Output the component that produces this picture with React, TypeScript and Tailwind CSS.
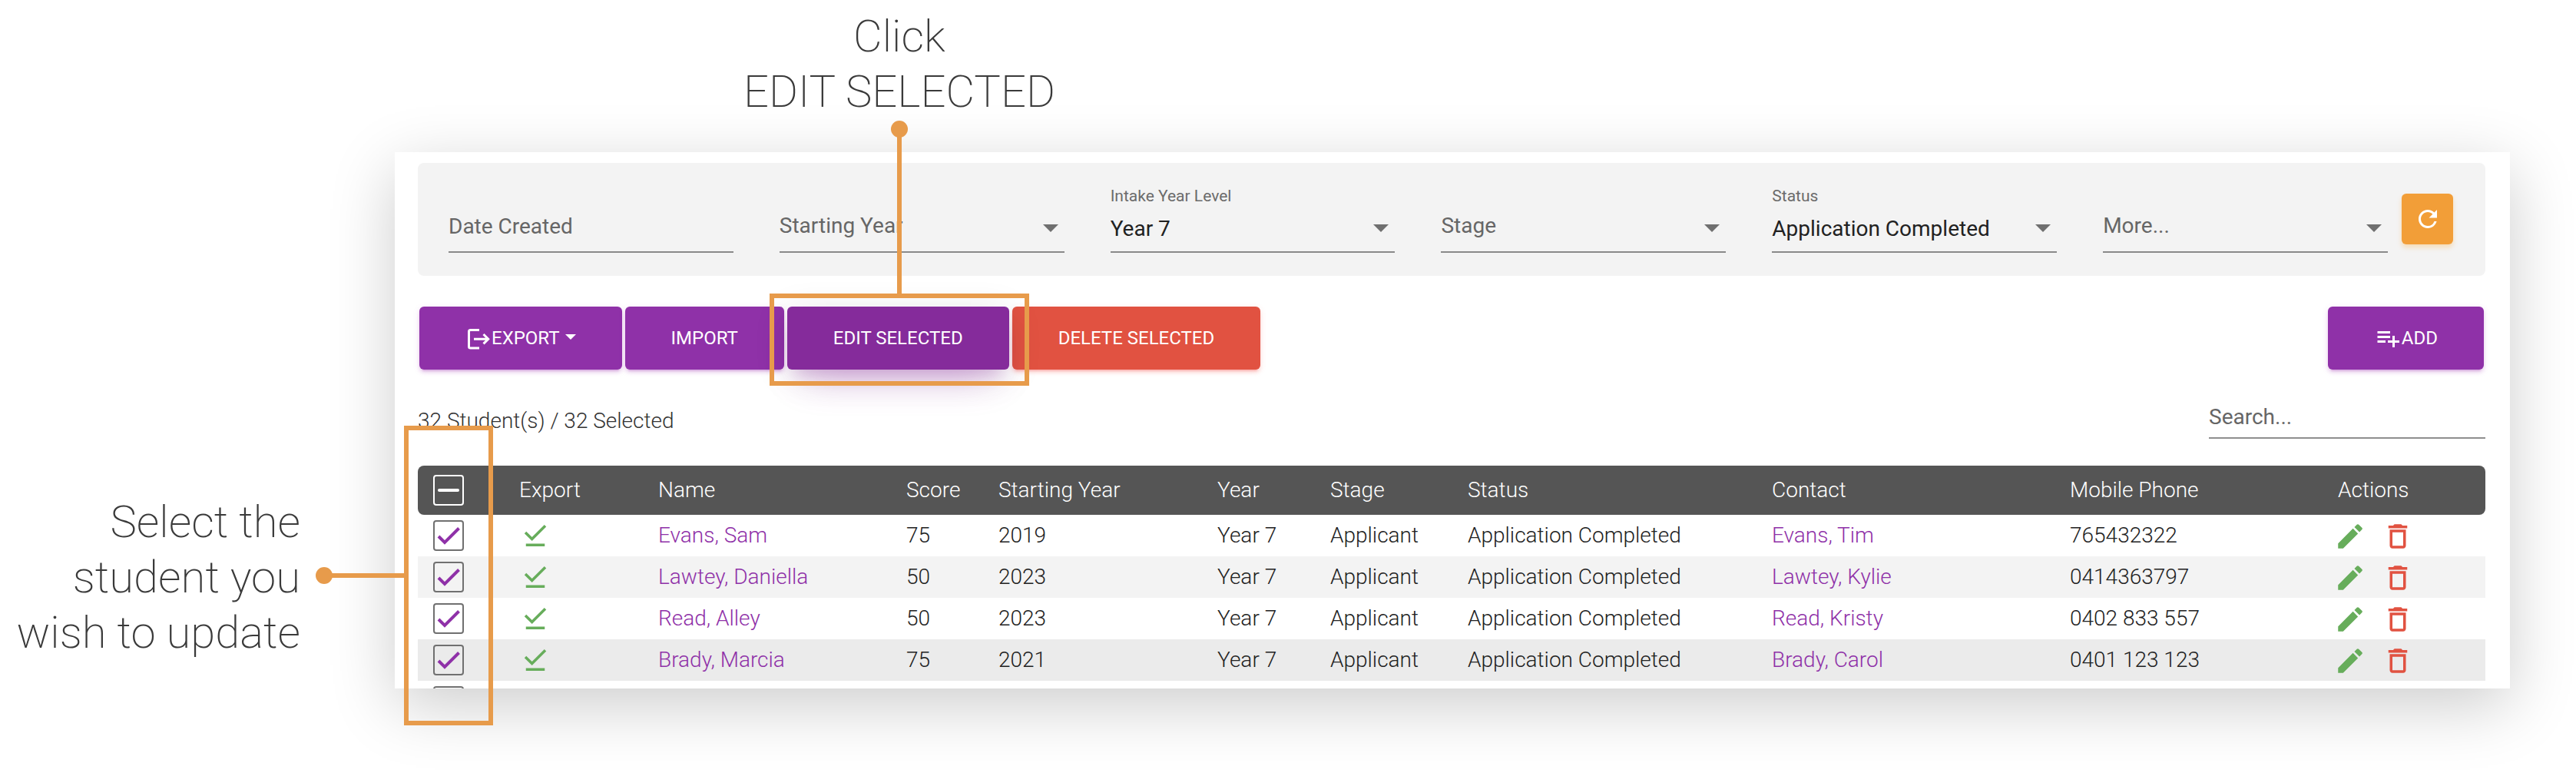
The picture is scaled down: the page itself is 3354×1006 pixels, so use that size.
import { useState } from "react";
import type { ReactNode } from "react";
import { MdDeleteOutline, MdDownloadDone, MdEdit, MdPlaylistAdd, MdRefresh } from "react-icons/md";
import { twMerge } from "tailwind-merge";

const FILTERS = [
  { id: "starting-year", label: "Starting Year", value: "" },
  { id: "intake-year-level", label: "Intake Year Level", value: "Year 7" },
  { id: "stage", label: "Stage", value: "" },
  { id: "status", label: "Status", value: "Application Completed" },
  { id: "more", label: "More...", value: "" },
] as const;

const COLUMNS = [
  { title: "Export", width: "w-[181px]" },
  { title: "Name", width: "w-[323px]" },
  { title: "Score", width: "w-[120px]" },
  { title: "Starting Year", width: "w-[285px]" },
  { title: "Year", width: "w-[147px]" },
  { title: "Stage", width: "w-[179px]" },
  { title: "Status", width: "w-[396px]" },
  { title: "Contact", width: "w-[388px]" },
  { title: "Mobile Phone", width: "w-[349px]" },
  { title: "Actions", width: "w-[192px]" },
] as const;

const STUDENTS = [
  { name: "Evans, Sam", score: 75, start: 2019, contact: "Evans, Tim", phone: "765432322", row: "bg-white" },
  { name: "Lawtey, Daniella", score: 50, start: 2023, contact: "Lawtey, Kylie", phone: "0414363797", row: "bg-[#f3f3f3]" },
  { name: "Read, Alley", score: 50, start: 2023, contact: "Read, Kristy", phone: "0402 833 557", row: "bg-white" },
  { name: "Brady, Marcia", score: 75, start: 2021, contact: "Brady, Carol", phone: "0401 123 123", row: "bg-[#ebebeb]" },
] as const;

function Caret({ className }: { className?: string }) {
  return (
    <svg viewBox="0 0 20 10" className={className} fill="currentColor" aria-hidden="true">
      <path d="M0 0h20L10 10z" />
    </svg>
  );
}

function ExportIcon() {
  return (
    <svg viewBox="0 0 32 32" className="h-8 w-8" fill="none" stroke="currentColor" strokeWidth="3" aria-hidden="true">
      <path d="M18 5.500H6.500Q4.500 5.500 4.500 7.500v19.500Q4.500 29 6.500 29H18M11 17.200h18M23.500 11l6.200 6.200-6.200 6.200" />
    </svg>
  );
}

function SelectField({ id, label, value }: { id: string; label: string; value: string }) {
  return (
    <div className="min-w-0 flex-1">
      {value && (
        <label htmlFor={id} className="mb-[2px] block text-[21px] leading-6 text-[#6b6b6b]">
          {label}
        </label>
      )}
      <div className="relative">
        <select
          id={id}
          aria-label={value ? undefined : label}
          className={twMerge(
            "block h-[68px] w-full appearance-none border-b-2 border-[#8a8a8a] bg-transparent text-[28px] text-[#666] outline-none",
            value && "h-[60px] text-[#212121]",
          )}
        >
          <option>{value || label}</option>
        </select>
        <Caret className="pointer-events-none absolute right-2 bottom-[27px] h-[10px] w-5 text-[#6f6f6f]" />
      </div>
    </div>
  );
}

function ActionButton({ className, children }: { className?: string; children: ReactNode }) {
  return (
    <button
      type="button"
      className={twMerge(
        "flex h-[82px] items-center justify-center rounded-md bg-[#8f31a8] px-[60px] text-2xl text-white shadow-[0_4px_4px_rgba(156,39,176,0.14),0_6px_2px_-4px_rgba(156,39,176,0.2),0_2px_10px_rgba(156,39,176,0.12)]",
        className,
      )}
    >
      {children}
    </button>
  );
}

function RowCheckbox({ label }: { label: string }) {
  const [checked, setChecked] = useState(true);

  return (
    <span className="relative ml-5 block h-10 w-10">
      <input
        type="checkbox"
        aria-label={label}
        checked={checked}
        onChange={() => setChecked(!checked)}
        className="block h-10 w-10 appearance-none rounded border-2 border-[#707070]"
      />
      {checked && (
        <svg
          viewBox="0 0 40 40"
          className="pointer-events-none absolute inset-0 h-10 w-10 text-[#8f31a8]"
          fill="none"
          stroke="currentColor"
          strokeWidth="4"
          aria-hidden="true"
        >
          <path d="M7 21l8 8 18.500-18.500" />
        </svg>
      )}
    </span>
  );
}

function Filters() {
  return (
    <form className="flex items-end rounded-lg bg-[#f3f3f3] pt-[31px] pr-[42px] pb-[30px] pl-10">
      <div className="flex flex-1 items-end gap-[60px]">
        <div className="min-w-0 flex-1">
          <input
            type="text"
            aria-label="Date Created"
            placeholder="Date Created"
            className="block h-[68px] w-full border-b-2 border-[#8a8a8a] bg-transparent text-[28px] outline-none placeholder:text-[#666] placeholder:opacity-100"
          />
        </div>
        {FILTERS.map((filter) => (
          <SelectField key={filter.id} {...filter} />
        ))}
      </div>
      <button
        type="button"
        aria-label="Refresh"
        className="mb-[11px] ml-[18px] flex h-[66px] w-[67px] items-center justify-center rounded-md bg-[#f29e38] text-white shadow-[0_4px_6px_rgba(255,152,0,0.25)]"
      >
        <MdRefresh className="h-9 w-9" />
      </button>
    </form>
  );
}

function StudentTable() {
  return (
    <div className="h-[290px] overflow-hidden">
      <table className="w-full table-fixed border-collapse text-left text-[28px] leading-none font-light text-[#222]">
        <thead>
          <tr className="h-16 text-white">
            <th className="w-[132px] rounded-l-lg bg-[#555] p-0">
              <span className="relative ml-5 block h-10 w-10">
                <input
                  type="checkbox"
                  aria-label="Select all students"
                  className="block h-10 w-10 appearance-none rounded border-2 border-white"
                />
                <span className="pointer-events-none absolute top-[18px] left-[6px] h-1 w-7 rounded-full bg-white" />
              </span>
            </th>
            {COLUMNS.map((column) => (
              <th key={column.title} className={twMerge("bg-[#555] p-0 font-light last:rounded-r-lg", column.width)}>
                {column.title}
              </th>
            ))}
          </tr>
        </thead>
        <tbody>
          {STUDENTS.map((student) => (
            <tr key={student.name} className={twMerge("h-[54px]", student.row)}>
              <td className="p-0">
                <RowCheckbox label={`Select ${student.name}`} />
              </td>
              <td className="p-0">
                <MdDownloadDone className="h-[42px] w-[42px] text-[#67ad5b]" />
              </td>
              <td className="p-0">
                <a href="#student" className="text-[#8f31a8]">
                  {student.name}
                </a>
              </td>
              <td className="p-0">{student.score}</td>
              <td className="p-0">{student.start}</td>
              <td className="p-0">Year 7</td>
              <td className="p-0">Applicant</td>
              <td className="p-0">Application Completed</td>
              <td className="p-0">
                <a href="#contact" className="text-[#8f31a8]">
                  {student.contact}
                </a>
              </td>
              <td className="p-0">{student.phone}</td>
              <td className="p-0">
                <div className="-ml-[5px] flex gap-5 pt-[2px]">
                  <button type="button" aria-label={`Edit ${student.name}`} className="text-[#67ad5b]">
                    <MdEdit className="h-[42px] w-[42px]" />
                  </button>
                  <button type="button" aria-label={`Delete ${student.name}`} className="text-[#e15241]">
                    <MdDeleteOutline className="h-[42px] w-[42px]" />
                  </button>
                </div>
              </td>
            </tr>
          ))}
          <tr className="h-[54px]">
            <td className="p-0" colSpan={11}>
              <RowCheckbox label="Select next student" />
            </td>
          </tr>
        </tbody>
      </table>
    </div>
  );
}

export default function App() {
  return (
    <div className="flex bg-white pb-[110px] font-['Roboto',sans-serif]">
      <aside className="w-[514px] shrink-0 self-end pr-[123px] pb-[37px] text-right text-[58px] leading-[72px] font-extralight text-[#3a3a3a]">
        <p>
          Select the
          <br />
          student you
          <br />
          wish to update
        </p>
      </aside>

      <main className="mr-[86px] min-w-0 flex-1">
        <p className="w-[1314px] pt-[11px] pb-[43px] text-center text-[58px] leading-[72px] font-extralight text-[#3a3a3a]">
          Click
          <br />
          EDIT SELECTED
        </p>

        <section className="bg-white px-[30px] pt-[14px] pr-8 shadow-[0_22px_80px_rgba(0,0,0,0.2)]">
          <Filters />

          <div className="mt-10 flex gap-1 px-[2px]">
            <ActionButton>
              <ExportIcon />
              <span className="ml-[2px]">EXPORT</span>
              <Caret className="mb-1 ml-[7px] h-[7px] w-[14px]" />
            </ActionButton>
            <ActionButton>IMPORT</ActionButton>
            <div className="relative">
              <ActionButton className="bg-[#852b9b] shadow-[0_28px_52px_-24px_rgba(156,39,176,0.42),0_8px_46px_rgba(0,0,0,0.12),0_16px_20px_-10px_rgba(156,39,176,0.2)]">
                EDIT SELECTED
              </ActionButton>
              <div className="pointer-events-none absolute -top-[17px] -right-[26px] -bottom-[21px] -left-[23px] z-10 border-6 border-[#e79b4b]">
                <span className="absolute bottom-full left-1/2 h-[220px] w-[6px] -translate-x-1/2 bg-[#e79b4b]" />
                <span className="absolute bottom-[calc(100%+209px)] left-1/2 h-[22px] w-[22px] -translate-x-1/2 rounded-full bg-[#e79b4b]" />
              </div>
            </div>
            <ActionButton className="bg-[#e15241] shadow-[0_4px_4px_rgba(244,67,54,0.14),0_6px_2px_-4px_rgba(244,67,54,0.2),0_2px_10px_rgba(244,67,54,0.12)]">
              DELETE SELECTED
            </ActionButton>
            <ActionButton className="ml-auto">
              <MdPlaylistAdd className="h-9 w-9" />
              ADD
            </ActionButton>
          </div>

          <div className="mt-[34px] flex items-end justify-between">
            <p className="text-[28px] leading-[46px] font-light text-[#333]">32 Student(s) / 32 Selected</p>
            <input
              type="search"
              aria-label="Search"
              placeholder="Search..."
              className="h-14 w-[360px] border-b-2 border-[#8f8f8f] bg-transparent text-[28px] outline-none placeholder:text-[#666] placeholder:opacity-100"
            />
          </div>

          <div className="relative mt-[35px]">
            <StudentTable />
            <div className="pointer-events-none absolute -top-[52px] -bottom-12 -left-[18px] w-[116px] border-6 border-[#e79b4b]">
              <span className="absolute top-1/2 right-full h-[6px] w-[104px] -translate-y-1/2 bg-[#e79b4b]" />
              <span className="absolute top-1/2 right-[calc(100%+99px)] h-[22px] w-[22px] -translate-y-1/2 rounded-full bg-[#e79b4b]" />
            </div>
          </div>
        </section>
      </main>
    </div>
  );
}
